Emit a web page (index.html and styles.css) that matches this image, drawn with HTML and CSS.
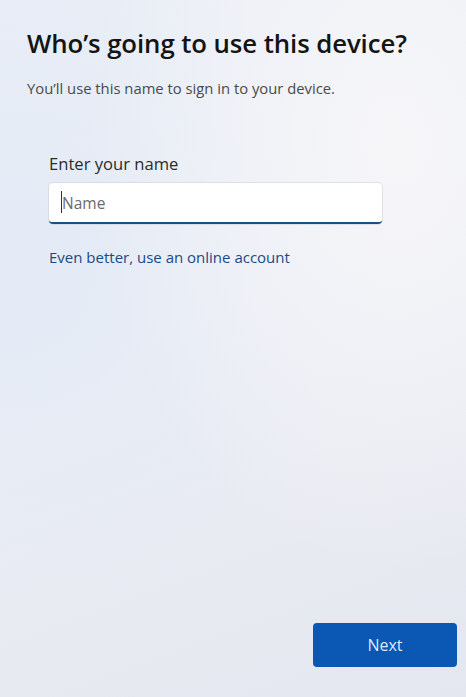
FILE: index.html
```html
<!DOCTYPE html>
<html lang="en">
<head>
<meta charset="utf-8">
<title>Who's going to use this device?</title>
<link rel="stylesheet" href="styles.css">
</head>
<body>
<main class="page">
  <section class="content">
    <h1 class="title">Who’s going to use this device?</h1>
    <p class="subtitle">You’ll use this name to sign in to your device.</p>
    <div class="form">
      <label class="label" for="name">Enter your name</label>
      <div class="field">
        <span class="caret"></span>
        <input id="name" class="input" type="text" placeholder="Name">
      </div>
      <a class="link" href="#">Even better, use an online account</a>
    </div>
  </section>
  <footer class="footer">
    <button class="next" type="button">Next</button>
  </footer>
</main>
</body>
</html>
```

FILE: styles.css
```css
html, body {
  margin: 0;
  padding: 0;
  height: 100%;
}
body {
  font-family: "Open Sans", "Noto Sans", sans-serif;
  background:
    radial-gradient(ellipse at 85% 20%, rgba(247,247,249,0.9), rgba(247,247,249,0) 55%),
    radial-gradient(ellipse at 0% 40%, rgba(226,234,246,0.9), rgba(226,234,246,0) 60%),
    linear-gradient(160deg, #e9eef6 0%, #eceef4 45%, #e4e7ef 100%);
  color: #1a1a1a;
}
.page {
  display: flex;
  flex-direction: column;
  min-height: 100vh;
  box-sizing: border-box;
  padding: 0 9px 30px 27px;
}
.content {
  display: flex;
  flex-direction: column;
}
.title {
  margin: 26px 0 0;
  font-size: 25.8px;
  font-weight: 600;
  line-height: 34px;
  color: #141414;
  letter-spacing: -0.1px;
  white-space: nowrap;
}
.subtitle {
  margin: 18px 0 0;
  font-size: 14.8px;
  line-height: 20px;
  color: #4a4a4a;
}
.form {
  display: flex;
  flex-direction: column;
  padding-left: 22px;
  margin-top: 55px;
  width: 333px;
}
.label {
  font-size: 16.6px;
  line-height: 22px;
  color: #2b2b2b;
}
.field {
  position: relative;
  margin-top: 8px;
  height: 41px;
  box-sizing: border-box;
  background: #ffffff;
  border-radius: 4px;
  border-bottom: 2px solid #1e4f82;
  box-shadow: 0 0 0 1px rgba(200,205,215,0.5);
}
.input {
  width: 100%;
  height: 100%;
  box-sizing: border-box;
  border: none;
  outline: none;
  background: transparent;
  padding: 0 12px 0 13px;
  font-family: inherit;
  font-size: 15.5px;
  color: #222;
}
.input::placeholder {
  color: #6b6b6b;
}
.caret {
  position: absolute;
  left: 12px;
  top: 8px;
  width: 1px;
  height: 22px;
  background: #333;
}
.link {
  margin-top: 23px;
  font-size: 15px;
  line-height: 20px;
  color: #1a4a86;
  text-decoration: none;
}
.footer {
  margin-top: auto;
  display: flex;
  justify-content: flex-end;
}
.next {
  width: 144px;
  height: 44px;
  border: none;
  border-radius: 4px;
  background: #0a57b4;
  color: #dfeafa;
  font-family: inherit;
  font-size: 16px;
}
```
